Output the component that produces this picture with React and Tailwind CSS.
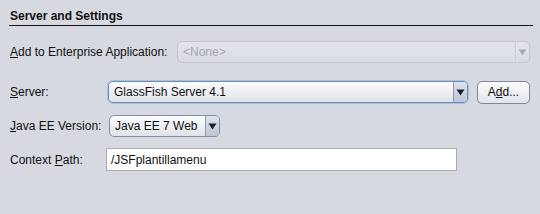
function Arrow({ disabled }) {
  return (
    <svg width="9" height="7" viewBox="0 0 9 7" className="block">
      <path d="M0.5 0.5h8L4.5 6.5z" fill={disabled ? '#a9acb2' : '#1f2328'} />
    </svg>
  );
}

function Combo({ value, width, disabled, focus }) {
  return (
    <div
      className={`shrink-0 flex h-[22px] rounded-[5px] border ${
        disabled
          ? 'border-[#c4c7cd] bg-gradient-to-b from-[#e3e5ea] to-[#d9dce2]'
          : focus
          ? 'border-[#6b8eb9] bg-gradient-to-b from-[#fbfcfd] via-[#eef0f3] to-[#dfe2e8] shadow-[0_0_0_1px_#a9c0dc]'
          : 'border-[#7f8ea3] bg-gradient-to-b from-[#fbfcfd] via-[#eef0f3] to-[#dfe2e8]'
      }`}
      style={{ width }}
    >
      <div className={`flex-1 flex items-center pl-[5px] whitespace-nowrap overflow-hidden ${disabled ? 'text-[#a4a7ad]' : 'text-[#111]'}`}>
        {value}
      </div>
      <div
        className={`w-[14px] shrink-0 flex items-center justify-center border-l ${
          disabled ? 'border-[#cdd0d6]' : 'border-[#8d9bb0] bg-gradient-to-b from-[#dde3ec] to-[#bcc7d6] rounded-r-[4px]'
        }`}
      >
        <Arrow disabled={disabled} />
      </div>
    </div>
  );
}

export default function App() {
  return (
    <div
      className="w-[540px] h-[214px] bg-[#d6d9df] text-[#111] text-[12px] leading-none"
      style={{ fontFamily: '"Liberation Sans", Arial, sans-serif' }}
    >
      <div className="pt-[10px] px-[9px]">
        <div className="font-bold pl-[1px] pb-[3px] border-b-[1.5px] border-[#111] w-[524px]">Server and Settings</div>
      </div>

      <div className="flex items-center pl-[10px] mt-[15px] h-[22px]">
        <span className="w-[167px] shrink-0 whitespace-nowrap">
          <span className="underline">A</span>dd to Enterprise Application:
        </span>
        <Combo value="<None>" width={353} disabled />
      </div>

      <div className="flex items-center pl-[10px] mt-[18px] h-[22px]">
        <span className="w-[98px] shrink-0 whitespace-nowrap">
          <span className="underline">S</span>erver:
        </span>
        <Combo value="GlassFish Server 4.1" width={360} focus />
        <button className="ml-[9px] shrink-0 w-[53px] h-[23px] rounded-[5px] border border-[#7d8797] bg-gradient-to-b from-[#fcfcfd] to-[#e2e5ea] text-[#111]">
          A<span className="underline">d</span>d...
        </button>
      </div>

      <div className="flex items-center pl-[10px] mt-[12px] h-[22px]">
        <span className="w-[99px] shrink-0 whitespace-nowrap">
          <span className="underline">J</span>ava EE Version:
        </span>
        <Combo value="Java EE 7 Web" width={111} />
      </div>

      <div className="flex items-center pl-[10px] mt-[11px] h-[23px]">
        <span className="w-[96px] shrink-0 whitespace-nowrap">
          Context <span className="underline">P</span>ath:
        </span>
        <div className="w-[351px] h-[23px] bg-white border border-[#a8abb1] flex items-center pl-[4px]">
          /JSFplantillamenu
        </div>
      </div>
    </div>
  );
}
